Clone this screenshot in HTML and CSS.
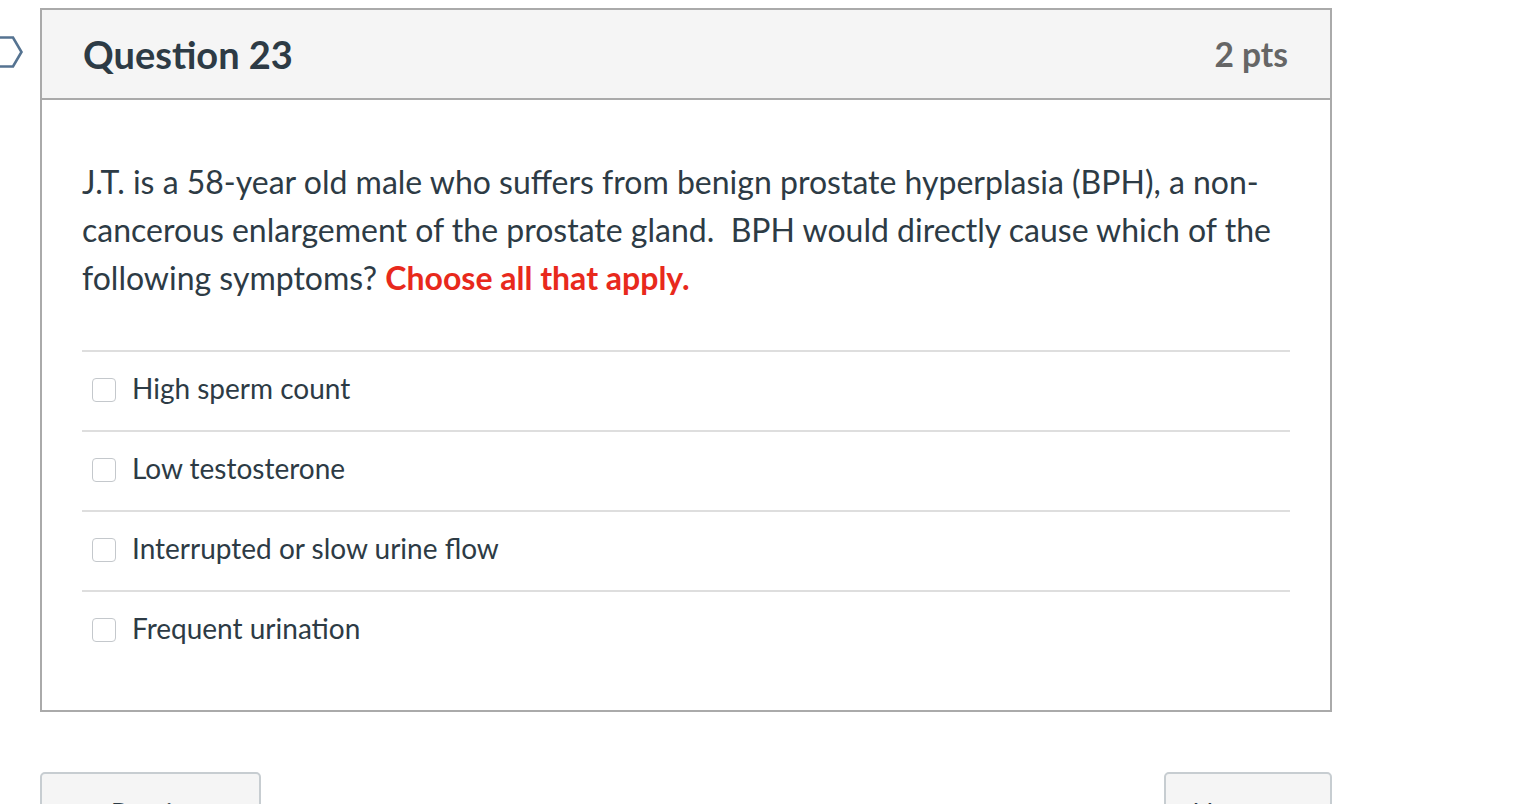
FILE: index.html
```html
<!DOCTYPE html>
<html lang="en">
<head>
<meta charset="utf-8">
<title>Question 23</title>
<link rel="stylesheet" href="styles.css">
</head>
<body>
<div class="page">
  <svg class="flag" width="24" height="34" viewBox="0 0 24 34" aria-hidden="true">
    <path d="M-4 2.5 H13 L21.5 17 L13 31.5 H-4" fill="none" stroke="#557391" stroke-width="2.6" stroke-linejoin="miter"/>
  </svg>
  <div class="card">
    <div class="card-header">
      <h2 class="q-title">Question 23</h2>
      <span class="q-pts">2 pts</span>
    </div>
    <div class="card-body">
      <p class="q-text">J.T. is a 58-year old male who suffers from benign prostate hyperplasia (BPH), a non-cancerous enlargement of the prostate gland.&nbsp; BPH would directly cause which of the following symptoms? <strong class="emph">Choose all that apply.</strong></p>
      <div class="answers">
        <label class="answer"><span class="box"></span><span class="a-text">High sperm count</span></label>
        <label class="answer"><span class="box"></span><span class="a-text">Low testosterone</span></label>
        <label class="answer"><span class="box"></span><span class="a-text">Interrupted or slow urine flow</span></label>
        <label class="answer"><span class="box"></span><span class="a-text">Frequent urination</span></label>
      </div>
    </div>
  </div>
  <div class="nav">
    <button class="btn btn-prev"><svg class="chev" width="12" height="16" viewBox="0 0 12 16" aria-hidden="true"><path d="M11 1 L2 8 L11 15 Z" fill="#2d3b45"/></svg><span>Previous</span></button>
    <button class="btn btn-next"><span>Next</span><svg class="chev" width="12" height="16" viewBox="0 0 12 16" aria-hidden="true"><path d="M1 1 L10 8 L1 15 Z" fill="#2d3b45"/></svg></button>
  </div>
</div>
</body>
</html>
```
FILE: styles.css
```css
html, body {
  margin: 0;
  padding: 0;
  background: #ffffff;
  overflow: hidden;
  height: 804px;
}
body {
  font-family: Lato, "Open Sans", sans-serif;
  color: #2d3b45;
}
.page {
  position: relative;
  padding: 8px 0 0 40px;
  width: 1292px;
}
.flag {
  position: absolute;
  left: 0;
  top: 35px;
}
.card {
  width: 1292px;
  height: 704px;
  box-sizing: border-box;
  border: 2px solid #aaaaaa;
  display: flex;
  flex-direction: column;
}
.card-header {
  height: 90px;
  box-sizing: border-box;
  background: #f5f5f5;
  border-bottom: 2px solid #aaaaaa;
  display: flex;
  align-items: center;
  justify-content: space-between;
  padding: 0 42px 0 41px;
}
.q-title {
  margin: 0;
  font-size: 38px;
  font-weight: 700;
  color: #2d3b45;
}
.q-pts {
  font-size: 33.5px;
  font-weight: 700;
  color: #666666;
}
.card-body {
  padding: 58px 40px 0 40px;
}
.q-text {
  margin: 0;
  font-size: 32px;
  line-height: 48px;
  color: #2d3b45;
}
.emph {
  color: #e8291c;
  font-weight: 700;
}
.answers {
  margin-top: 48px;
  display: flex;
  flex-direction: column;
}
.answer {
  height: 80px;
  box-sizing: border-box;
  border-top: 2px solid #dedede;
  display: flex;
  align-items: center;
  padding-left: 10px;
  gap: 16px;
  font-size: 28px;
  color: #2d3b45;
}
.box {
  width: 22px;
  height: 22px;
  border: 1.5px solid #c4c8cc;
  border-radius: 4px;
  background: #fff;
  flex: none;
  margin-top: -3px;
}
.a-text {
  line-height: 40px;
  margin-top: -6px;
}
.nav {
  display: flex;
  justify-content: space-between;
  margin-top: 60px;
}
.btn {
  font-family: Lato, "Open Sans", sans-serif;
  font-size: 28px;
  color: #2d3b45;
  background: #f5f5f5;
  border: 2px solid #c7cdd1;
  border-radius: 5px;
  height: 80px;
  padding: 9px 0 0 0;
  line-height: 60px;
  display: flex;
  align-items: flex-start;
  justify-content: center;
  gap: 14px;
}
.chev {
  margin-top: 24px;
  flex: none;
}
.btn-prev { width: 221px; }
.btn-next { width: 168px; gap: 40px; }
```
